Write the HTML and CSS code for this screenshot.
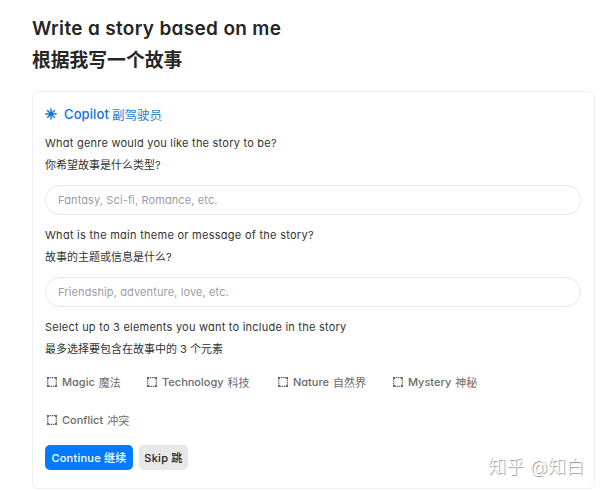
FILE: index.html
```html
<!DOCTYPE html>
<html lang="zh-CN">
<head>
  <meta charset="UTF-8"/>
  <meta name="viewport" content="width=device-width, initial-scale=1.0"/>
  <title>Write a story based on me</title>
  <link rel="stylesheet" href="styles.css">
</head>
<body>
  <h1>Write a story based on me</h1>
  <h1 class="title-zh">根据我写一个故事</h1>

  <div class="card">
    <div class="card-title">
      <svg width="12" height="12" viewBox="0 0 12 12" fill="none" stroke="currentColor" stroke-width="1.4">
        <path d="M6 0.5v11M0.3 6h11.4M2.2 2.2l7.6 7.6M9.8 2.2l-7.6 7.6"/>
      </svg>
      <span class="name">Copilot</span>
      <span>副驾驶员</span>
    </div>

    <label class="question" for="genre">What genre would you like the story to be?</label>
    <p class="question-zh">你希望故事是什么类型?</p>
    <input type="text" id="genre" placeholder="Fantasy, Sci-fi, Romance, etc."/>

    <label class="question theme" for="theme">What is the main theme or message of the story?</label>
    <p class="question-zh">故事的主题或信息是什么?</p>
    <input type="text" id="theme" placeholder="Friendship, adventure, love, etc."/>

    <p class="question elements">Select up to 3 elements you want to include in the story</p>
    <p class="question-zh">最多选择要包含在故事中的 3 个元素</p>

    <div class="options">
      <div class="option"><svg class="box" viewBox="0 0 10 10"><use href="#dashed-box"/></svg><b>Magic</b><span>魔法</span></div>
      <div class="option"><svg class="box" viewBox="0 0 10 10"><use href="#dashed-box"/></svg><b>Technology</b><span>科技</span></div>
      <div class="option"><svg class="box" viewBox="0 0 10 10"><use href="#dashed-box"/></svg><b>Nature</b><span>自然界</span></div>
      <div class="option"><svg class="box" viewBox="0 0 10 10"><use href="#dashed-box"/></svg><b>Mystery</b><span>神秘</span></div>
      <div class="option"><svg class="box" viewBox="0 0 10 10"><use href="#dashed-box"/></svg><b>Conflict</b><span>冲突</span></div>
    </div>

    <div class="buttons">
      <button class="continue">Continue 继续</button>
      <button class="skip">Skip 跳</button>
    </div>
  </div>

  <div class="watermark">知乎 @知白</div>

  <svg width="0" height="0">
    <defs>
      <g id="dashed-box">
        <rect x="0.7" y="0.7" width="8.6" height="8.6" fill="none" stroke="#666" stroke-width="1.2" stroke-dasharray="1.5 0.65"/>
        <path d="M0 0h2v2h-2zM8 0h2v2h-2zM0 8h2v2h-2zM8 8h2v2h-2z" fill="#666"/>
      </g>
    </defs>
  </svg>
</body>
</html>
```
FILE: styles.css
```css
* {
  box-sizing: border-box;
  padding: 0;
  margin: 0;
}

body {
  font-family: Inter, "Noto Sans CJK SC", sans-serif;
  font-feature-settings: "cv11";
  background: #fff;
  color: #333;
  height: 491px;
  padding: 13px 5px 0 32px;
  overflow: hidden;
}

h1 {
  height: 31px;
  line-height: 31px;
  font-size: 19px;
  font-weight: 600;
  letter-spacing: 0.32px;
  color: #262626;
  white-space: nowrap;
}

.title-zh {
  line-height: 33px;
  font-size: 18.8px;
  font-weight: 700;
  letter-spacing: 0;
}

.card {
  height: 398px;
  margin-top: 16px;
  padding: 12px 13px 0 12px;
  border: 1px solid #f0f0f0;
  border-radius: 6px;
}

.card-title {
  display: flex;
  align-items: center;
  height: 20px;
  font-size: 12.5px;
  color: #2a80d4;
}

.card-title svg {
  margin-right: 7px;
  color: #1173da;
}

.card-title .name {
  font-size: 13px;
  font-weight: 500;
  letter-spacing: 0.1px;
  margin-right: 3px;
  color: #1173da;
}

.question,
.question-zh {
  display: block;
  height: 22px;
  line-height: 22px;
  font-size: 11px;
  white-space: nowrap;
}

.question {
  margin-top: 8px;
  letter-spacing: 0.23px;
}

.theme,
.elements {
  margin-top: 9px;
}

.theme {
  letter-spacing: 0.27px;
}

input {
  display: block;
  width: 100%;
  height: 30px;
  margin-top: 9px;
  padding: 0 12px;
  border: 1px solid #e6e6e8;
  border-radius: 15px;
  font: inherit;
  font-feature-settings: inherit;
  font-size: 11px;
  letter-spacing: 0.12px;
  outline: none;
}

input::placeholder {
  color: #9c9ca8;
}

.options {
  display: grid;
  grid-template-columns: 100px 131px 115px 90px;
  grid-auto-rows: 38px;
  margin: 3px 0 0 2px;
}

.option {
  display: flex;
  align-items: center;
  font-size: 11px;
  color: #6b6b6b;
  white-space: nowrap;
}

.option b {
  font-weight: 500;
  margin: 0 4px 0 5px;
}

.box {
  width: 10px;
  height: 10px;
}

.buttons {
  display: flex;
  gap: 6px;
  margin-top: 6px;
}

button {
  height: 25px;
  border: none;
  border-radius: 5px;
  font: inherit;
  font-feature-settings: inherit;
  font-size: 11px;
  font-weight: 500;
  letter-spacing: 0.25px;
  line-height: 24px;
  white-space: nowrap;
}

.continue {
  width: 88px;
  background: #047bfe;
  color: #fff;
}

.skip {
  width: 49px;
  background: #e7e7e7;
  color: #222;
}

/* sits over the bottom right corner of the card */
.watermark {
  position: absolute;
  left: 488px;
  top: 455px;
  line-height: 24px;
  font-size: 18px;
  font-weight: 300;
  letter-spacing: 0.3px;
  color: #fff;
  text-shadow: 1px 1px 1px #888;
  white-space: nowrap;
}
```
